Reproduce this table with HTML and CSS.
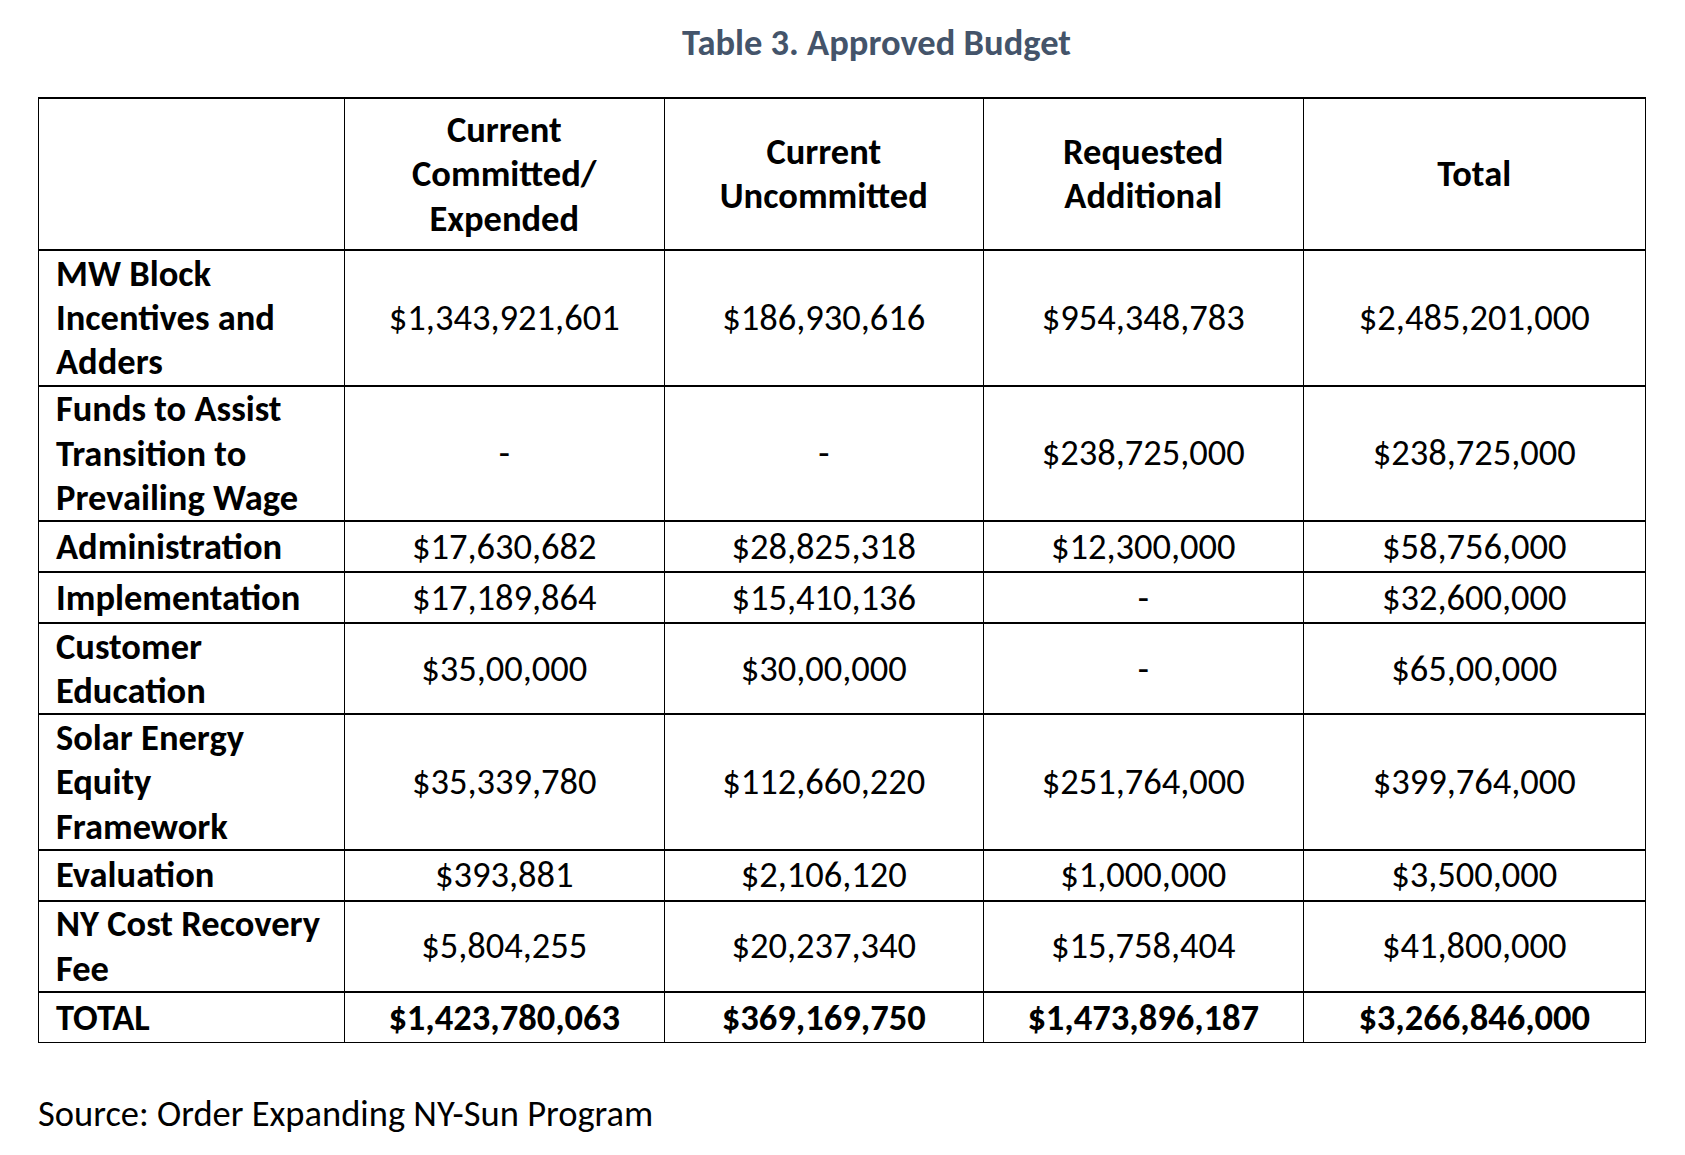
FILE: index.html
```html
<!DOCTYPE html>
<html lang="en">
<head>
<meta charset="utf-8">
<title>Table 3. Approved Budget</title>
<link rel="stylesheet" href="styles.css">
</head>
<body>
<div class="page">
  <h1 class="title">Table 3. Approved Budget</h1>
  <table class="budget">
    <colgroup>
      <col class="col-label">
      <col class="col-num">
      <col class="col-num">
      <col class="col-num">
      <col class="col-total">
    </colgroup>
    <thead>
      <tr>
        <th class="corner"></th>
        <th>Current<br>Committed/<br>Expended</th>
        <th>Current<br>Uncommitted</th>
        <th>Requested<br>Additional</th>
        <th>Total</th>
      </tr>
    </thead>
    <tbody>
      <tr>
        <th class="label">MW Block<br>Incentives and<br>Adders</th>
        <td>$1,343,921,601</td><td>$186,930,616</td><td>$954,348,783</td><td>$2,485,201,000</td>
      </tr>
      <tr>
        <th class="label">Funds to Assist<br>Transition to<br>Prevailing Wage</th>
        <td>-</td><td>-</td><td>$238,725,000</td><td>$238,725,000</td>
      </tr>
      <tr>
        <th class="label">Administration</th>
        <td>$17,630,682</td><td>$28,825,318</td><td>$12,300,000</td><td>$58,756,000</td>
      </tr>
      <tr>
        <th class="label">Implementation</th>
        <td>$17,189,864</td><td>$15,410,136</td><td>-</td><td>$32,600,000</td>
      </tr>
      <tr>
        <th class="label">Customer<br>Education</th>
        <td>$35,00,000</td><td>$30,00,000</td><td>-</td><td>$65,00,000</td>
      </tr>
      <tr>
        <th class="label">Solar Energy<br>Equity<br>Framework</th>
        <td>$35,339,780</td><td>$112,660,220</td><td>$251,764,000</td><td>$399,764,000</td>
      </tr>
      <tr>
        <th class="label">Evaluation</th>
        <td>$393,881</td><td>$2,106,120</td><td>$1,000,000</td><td>$3,500,000</td>
      </tr>
      <tr>
        <th class="label">NY Cost Recovery<br>Fee</th>
        <td>$5,804,255</td><td>$20,237,340</td><td>$15,758,404</td><td>$41,800,000</td>
      </tr>
    </tbody>
    <tfoot>
      <tr class="total-row">
        <th class="label">TOTAL</th>
        <td>$1,423,780,063</td><td>$369,169,750</td><td>$1,473,896,187</td><td>$3,266,846,000</td>
      </tr>
    </tfoot>
  </table>
  <p class="source">Source: Order Expanding NY-Sun Program</p>
</div>
</body>
</html>
```

FILE: styles.css
```css
html, body {
  margin: 0;
  padding: 0;
  background: #ffffff;
}

body {
  font-family: Carlito, Calibri, "Open Sans", sans-serif;
  font-size: 36.5px;
  line-height: 44.6px;
  color: #000000;
}

.page {
  padding: 21px 0 0 38px;
  width: 1607px;
}

.title {
  margin: 0;
  padding-left: 70px;
  font-size: 36.5px;
  line-height: 44.6px;
  font-weight: 700;
  color: #44546a;
  text-align: center;
}

.budget {
  margin-top: 31px;
  width: 1607px;
  table-layout: fixed;
  border-collapse: collapse;
}

.col-label { width: 306px; }
.col-num { width: 319.5px; }
.col-total { width: 342.5px; }

.budget th,
.budget td {
  border-top: 2px solid #000;
  border-left: 1px solid #000;
  border-right: 1px solid #000;
  vertical-align: middle;
  white-space: nowrap;
}

.budget thead th {
  font-weight: 700;
  text-align: center;
  padding: 9px 4px 8px;
}

.budget th.label {
  font-weight: 700;
  text-align: left;
  line-height: 44.3px;
  padding: 0.5px 4px 0 17px;
}

.budget td {
  font-weight: 400;
  text-align: center;
  padding: 2.5px 4px 2px;
}

.budget tfoot th,
.budget tfoot td {
  border-bottom: 1px solid #000;
  font-weight: 700;
}

.source {
  margin: 49px 0 0;
  font-weight: 400;
}
```
